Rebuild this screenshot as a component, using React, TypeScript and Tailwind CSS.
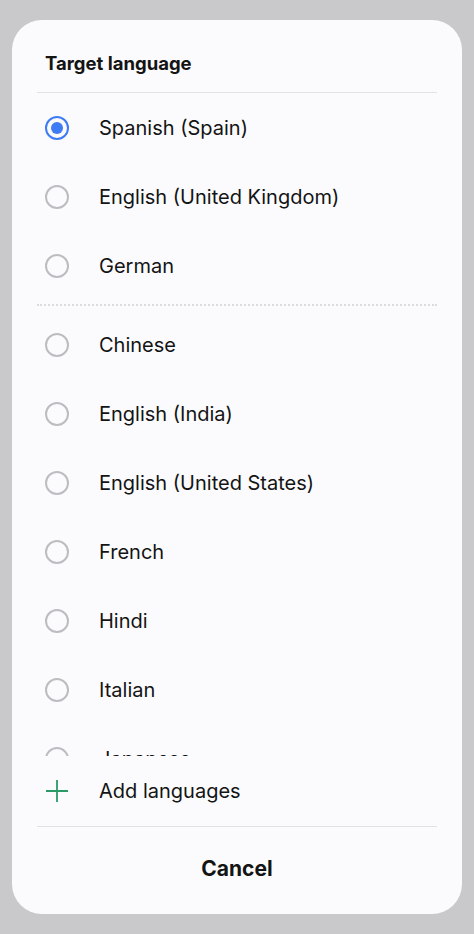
import React from "react";

const before = ["Spanish (Spain)", "English (United Kingdom)", "German"];
const after = [
  "Chinese",
  "English (India)",
  "English (United States)",
  "French",
  "Hindi",
  "Italian",
  "Japanese",
];

function Radio({ checked }: { checked?: boolean }) {
  if (checked) {
    return (
      <div className="w-[24px] h-[24px] rounded-full border-[2.5px] border-[#3d7cf2] flex items-center justify-center shrink-0">
        <div className="w-[12px] h-[12px] rounded-full bg-[#3d7cf2]" />
      </div>
    );
  }
  return <div className="w-[24px] h-[24px] rounded-full border-2 border-[#bdbdc1] shrink-0" />;
}

function Row({ label, checked }: { label: string; checked?: boolean }) {
  return (
    <div className="h-[69px] flex items-center pl-[33px] gap-[30px] shrink-0">
      <Radio checked={checked} />
      <span className="text-[20px] text-[#141414]">{label}</span>
    </div>
  );
}

export default function App() {
  return (
    <div
      className="w-[474px] h-[934px] bg-[#c9c9cc] pt-[20px] pl-[12px]"
      style={{ fontFamily: "Inter, 'Noto Sans', sans-serif" }}
    >
      <div className="w-[450px] h-[894px] bg-[#fbfbfe] rounded-[30px] flex flex-col overflow-hidden">
        <div className="h-[72px] pt-[16px] flex items-center pl-[33px] shrink-0">
          <span className="text-[18.5px] font-bold text-[#141414]">Target language</span>
        </div>
        <div className="mx-[25px] h-px bg-[#e2e2e6] shrink-0" />
        <div className="h-[663px] overflow-hidden flex flex-col shrink-0">
          {before.map((l, i) => (
            <Row key={l} label={l} checked={i === 0} />
          ))}
          <div className="h-[10px] flex items-center mx-[25px] shrink-0">
            <div className="w-full border-t-2 border-dotted border-[#dcdce0]" />
          </div>
          {after.map((l) => (
            <Row key={l} label={l} />
          ))}
        </div>
        <div className="h-[70px] flex items-center pl-[33px] gap-[30px] shrink-0">
          <svg width="24" height="24" viewBox="0 0 24 24" className="shrink-0">
            <path d="M12 1v22M1 12h22" stroke="#2a9a66" strokeWidth="1.8" fill="none" />
          </svg>
          <span className="text-[20px] text-[#141414]">Add languages</span>
        </div>
        <div className="mx-[25px] h-px bg-[#e2e2e6] shrink-0" />
        <div className="flex-1 flex items-center justify-center pb-[4px]">
          <span className="text-[21px] font-bold text-[#141414]">Cancel</span>
        </div>
      </div>
    </div>
  );
}
